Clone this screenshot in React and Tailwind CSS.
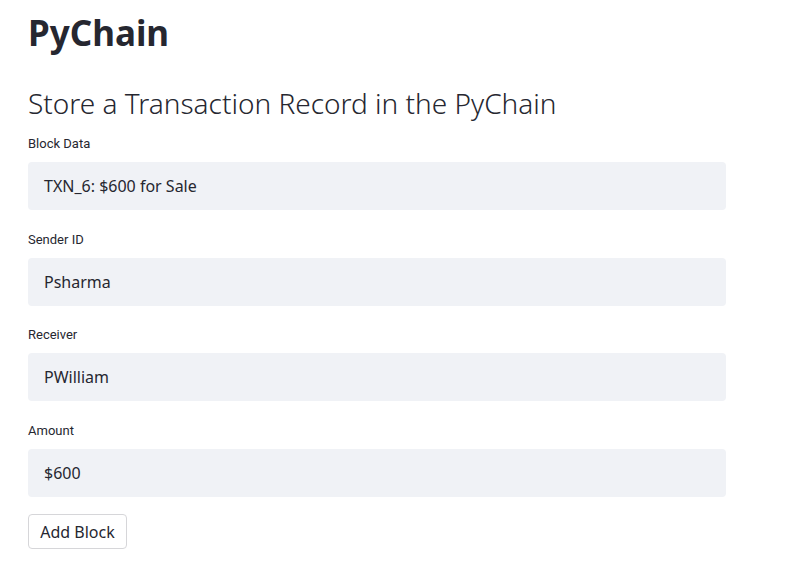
import React from "react";

const fields = [
  { label: "Block Data", value: "TXN_6: $600 for Sale" },
  { label: "Sender ID", value: "Psharma" },
  { label: "Receiver", value: "PWilliam" },
  { label: "Amount", value: "$600" },
];

function Field({ label, value }) {
  return (
    <div className="flex flex-col">
      <label className="h-[19px] text-[13px] leading-[19px] text-[#262730] font-['Roboto',sans-serif]">
        {label}
      </label>
      <div className="mt-[9px] h-[48px] w-[698px] rounded-[4px] bg-[#f0f2f6] px-4 flex items-center text-[16px] text-[#262730]">
        {value}
      </div>
    </div>
  );
}

export default function App() {
  return (
    <div className="min-h-[567px] bg-white font-['Noto_Sans',sans-serif] text-[#262730]">
      <div className="px-[28px] pt-[8px]">
        <h1 className="text-[35px] font-bold leading-[50px] text-[#262730]">
          PyChain
        </h1>
        <h2 className="mt-[25px] text-[28px] font-light leading-[40px]">
          Store a Transaction Record in the PyChain
        </h2>
        <div className="mt-[11px] flex flex-col gap-[19.7px]">
          {fields.map((f) => (
            <Field key={f.label} label={f.label} value={f.value} />
          ))}
        </div>
        <button className="mt-[17px] h-[35px] w-[99px] rounded-[4px] border border-[#d6d6d9] bg-white text-[16px] text-[#262730]">
          Add Block
        </button>
      </div>
    </div>
  );
}
